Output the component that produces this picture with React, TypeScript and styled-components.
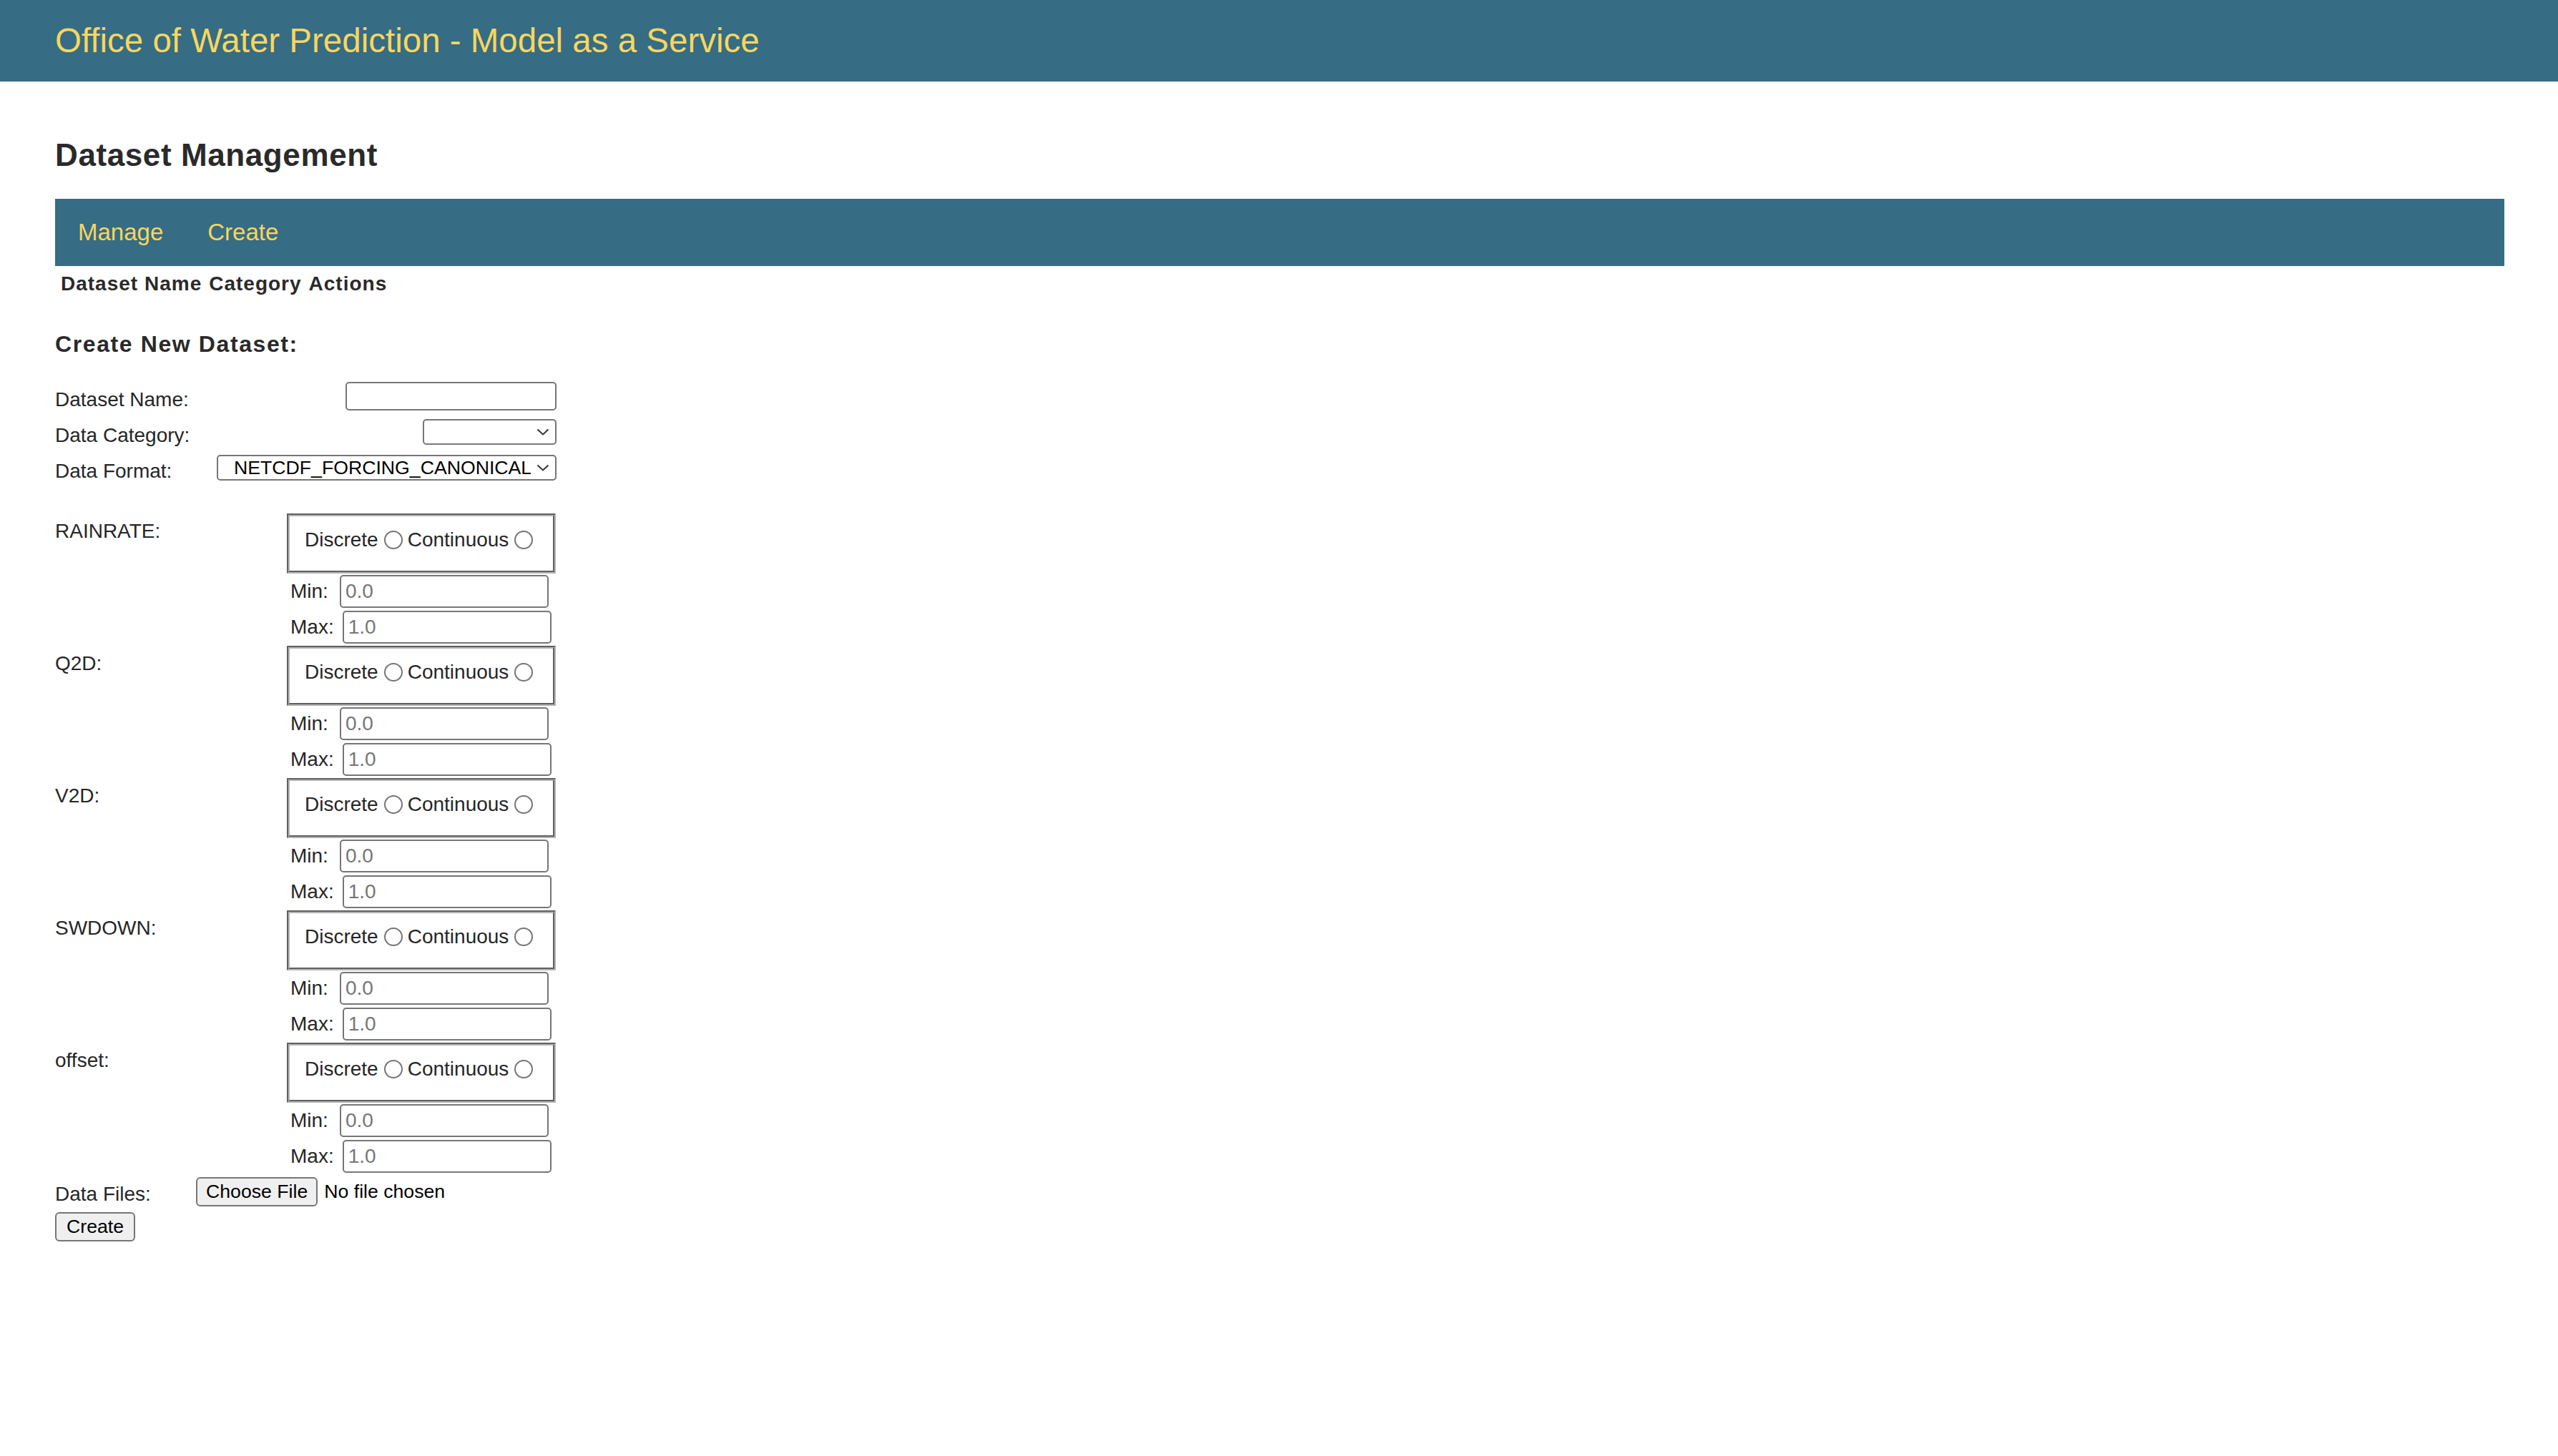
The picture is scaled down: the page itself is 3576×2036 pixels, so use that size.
import React from "react";
import styled, { createGlobalStyle } from "styled-components";

const TEAL = "#366c84";
const GOLD = "#f8d65e";
const INK = "#2a2a2a";
const CONTROL_BORDER = "#767676";

const GlobalStyle = createGlobalStyle`
  html, body { margin: 0; padding: 0; background: #ffffff; }
  body {
    font-family: "Liberation Sans", Arial, sans-serif;
    color: #262626;
  }
  *, *::before, *::after { box-sizing: border-box; }
`;

const Header = styled.header`
  height: 114px;
  background: ${TEAL};
  display: flex;
  align-items: center;
  padding-left: 77px;
`;

const SiteTitle = styled.h1`
  margin: 0;
  font-size: 47.5px;
  font-weight: 400;
  line-height: 1;
  color: ${GOLD};
`;

const Main = styled.main`
  padding: 0 75px 60px 77px;
`;

const PageTitle = styled.h2`
  margin: 78px 0 0;
  font-size: 44px;
  line-height: 50px;
  font-weight: 700;
  letter-spacing: 0.6px;
  color: ${INK};
`;

const NavBar = styled.nav`
  margin-top: 36px;
  height: 94px;
  background: ${TEAL};
  display: flex;
  align-items: center;
  gap: 62px;
  padding-left: 32px;
`;

const NavLink = styled.a`
  font-size: 33px;
  color: ${GOLD};
  text-decoration: none;
  cursor: pointer;
`;

const DatasetTable = styled.table`
  margin: 7px 0 0 3px;
  border-collapse: collapse;
`;

const HeadCell = styled.th`
  padding: 0 5px;
  font-size: 28px;
  line-height: 36px;
  font-weight: 700;
  letter-spacing: 1px;
  text-align: left;
  color: ${INK};
`;

const SectionTitle = styled.h3`
  margin: 46px 0 0;
  font-size: 32px;
  line-height: 40px;
  font-weight: 700;
  letter-spacing: 1.6px;
  color: ${INK};
`;

const Form = styled.form`
  margin-top: 28px;
`;

const FieldRow = styled.div`
  width: 701px;
  height: 50px;
  display: flex;
  justify-content: space-between;
  align-items: center;
`;

const FieldLabel = styled.label`
  font-size: 28px;
  line-height: 34px;
  padding-top: 10px;
`;

const TextInput = styled.input`
  width: 295px;
  height: 40px;
  border: 2px solid ${CONTROL_BORDER};
  border-radius: 5px;
  padding: 0 6px;
  font-family: "Liberation Sans", Arial, sans-serif;
  font-size: 26.67px;
  background: #fff;
`;

const SelectWrap = styled.div<{ $width: number }>`
  position: relative;
  width: ${(p) => p.$width}px;
  height: 36px;
`;

const Select = styled.select`
  appearance: none;
  -webkit-appearance: none;
  width: 100%;
  height: 100%;
  border: 2px solid ${CONTROL_BORDER};
  border-radius: 5px;
  padding: 0 34px 0 22px;
  font-family: "Liberation Sans", Arial, sans-serif;
  font-size: 26.67px;
  color: #000;
  background: #fff;
`;

const Chevron = styled.svg`
  position: absolute;
  right: 10px;
  top: 50%;
  transform: translateY(-50%);
  pointer-events: none;
`;

const VariableList = styled.div`
  margin-top: 39px;
`;

const VariableBlock = styled.div`
  display: grid;
  grid-template-columns: 324px 372px;
  height: 185px;
`;

const VariableName = styled.div`
  font-size: 28px;
  line-height: 34px;
  padding-top: 8px;
`;

const VariableControls = styled.div`
  display: flex;
  flex-direction: column;
`;

const TypeFieldset = styled.fieldset`
  margin: 0;
  width: 372px;
  height: 84px;
  border: 4px groove #b4b4b4;
  padding: 10px 21px 0 21px;
`;

const TypeOptions = styled.div`
  height: 46px;
  display: flex;
  align-items: center;
  font-size: 28px;
`;

const Radio = styled.input`
  appearance: none;
  -webkit-appearance: none;
  width: 26px;
  height: 26px;
  margin: 0 7px 0 8px;
  border: 2px solid ${CONTROL_BORDER};
  border-radius: 50%;
  background: #fff;
  flex: none;
`;

const RangeRow = styled.div<{ $top: number }>`
  margin-top: ${(p) => p.$top}px;
  height: 46px;
  display: flex;
  align-items: center;
  padding-left: 5px;
`;

const RangeLabel = styled.label<{ $gap: number }>`
  font-size: 28px;
  margin-right: ${(p) => p.$gap}px;
`;

const RangeInput = styled.input`
  width: 292px;
  height: 46px;
  border: 2px solid ${CONTROL_BORDER};
  border-radius: 5px;
  padding: 0 6px;
  font-family: "Liberation Sans", Arial, sans-serif;
  font-size: 28px;
  background: #fff;
  &::placeholder { color: #767676; }
`;

const FilesRow = styled.div`
  margin-top: 2px;
  height: 43px;
  display: flex;
  align-items: center;
`;

const FilesLabel = styled.label`
  width: 197px;
  font-size: 28px;
  padding-top: 6px;
`;

const PlainButton = styled.button`
  height: 41px;
  padding: 0 12px;
  border: 2px solid ${CONTROL_BORDER};
  border-radius: 6px;
  background: #efefef;
  color: #000;
  font-family: "Liberation Sans", Arial, sans-serif;
  font-size: 26.67px;
  line-height: 1;
`;

const FileStatus = styled.span`
  margin-left: 9px;
  font-size: 26.67px;
  color: #000;
`;

const SubmitButton = styled(PlainButton)`
  display: block;
  margin-top: 7px;
  padding: 0 14px;
`;

const ChevronIcon = () => (
  <Chevron width="18" height="10" viewBox="0 0 18 10">
    <polyline points="1.5,1.5 9,8.5 16.5,1.5" fill="none" stroke="#333" strokeWidth="2" />
  </Chevron>
);

const VARIABLES = ["RAINRATE", "Q2D", "V2D", "SWDOWN", "offset"];

export default function App() {
  return (
    <>
      <GlobalStyle />
      <Header>
        <SiteTitle>Office of Water Prediction - Model as a Service</SiteTitle>
      </Header>
      <Main>
        <PageTitle>Dataset Management</PageTitle>
        <NavBar>
          <NavLink>Manage</NavLink>
          <NavLink>Create</NavLink>
        </NavBar>
        <DatasetTable>
          <thead>
            <tr>
              <HeadCell>Dataset Name</HeadCell>
              <HeadCell>Category</HeadCell>
              <HeadCell>Actions</HeadCell>
            </tr>
          </thead>
        </DatasetTable>
        <SectionTitle>Create New Dataset:</SectionTitle>
        <Form onSubmit={(e) => e.preventDefault()}>
          <FieldRow>
            <FieldLabel>Dataset Name:</FieldLabel>
            <TextInput type="text" />
          </FieldRow>
          <FieldRow>
            <FieldLabel>Data Category:</FieldLabel>
            <SelectWrap $width={187}>
              <Select defaultValue="">
                <option value=""></option>
              </Select>
              <ChevronIcon />
            </SelectWrap>
          </FieldRow>
          <FieldRow>
            <FieldLabel>Data Format:</FieldLabel>
            <SelectWrap $width={475}>
              <Select defaultValue="NETCDF_FORCING_CANONICAL">
                <option value="NETCDF_FORCING_CANONICAL">NETCDF_FORCING_CANONICAL</option>
              </Select>
              <ChevronIcon />
            </SelectWrap>
          </FieldRow>

          <VariableList>
            {VARIABLES.map((name) => (
              <VariableBlock key={name}>
                <VariableName>{name}:</VariableName>
                <VariableControls>
                  <TypeFieldset>
                    <TypeOptions>
                      Discrete
                      <Radio type="radio" name={`${name}-type`} value="discrete" />
                      Continuous
                      <Radio type="radio" name={`${name}-type`} value="continuous" />
                    </TypeOptions>
                  </TypeFieldset>
                  <RangeRow $top={2}>
                    <RangeLabel $gap={16}>Min:</RangeLabel>
                    <RangeInput type="text" placeholder="0.0" />
                  </RangeRow>
                  <RangeRow $top={4}>
                    <RangeLabel $gap={12}>Max:</RangeLabel>
                    <RangeInput type="text" placeholder="1.0" />
                  </RangeRow>
                </VariableControls>
              </VariableBlock>
            ))}
          </VariableList>

          <FilesRow>
            <FilesLabel>Data Files:</FilesLabel>
            <PlainButton type="button">Choose File</PlainButton>
            <FileStatus>No file chosen</FileStatus>
          </FilesRow>
          <SubmitButton type="submit">Create</SubmitButton>
        </Form>
      </Main>
    </>
  );
}
